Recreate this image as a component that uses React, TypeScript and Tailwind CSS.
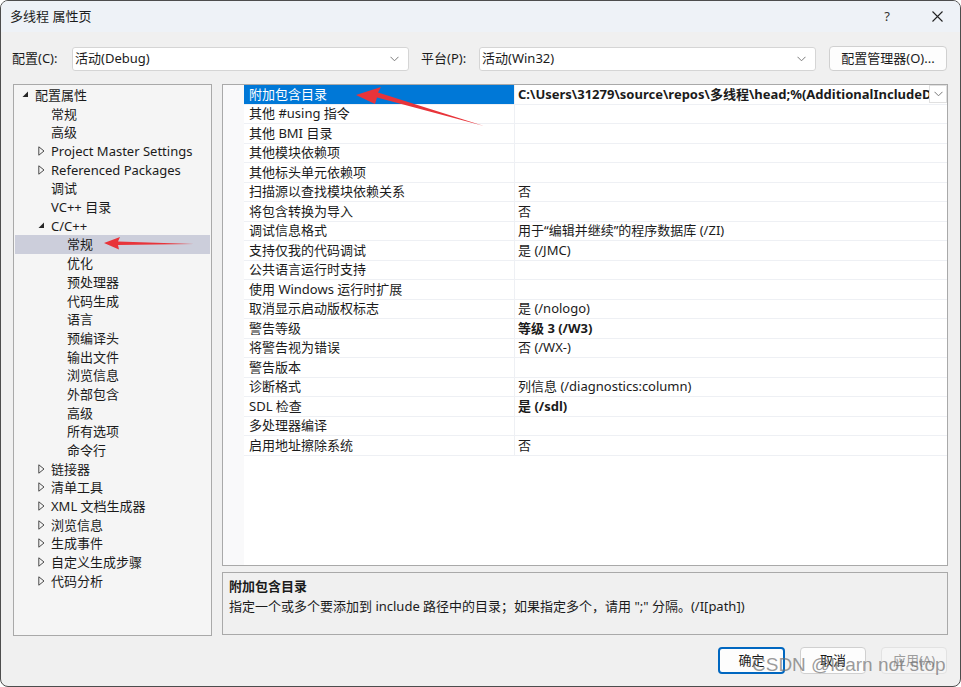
import React from 'react';

type TreeItem = { label: string; level: number; state?: 'open' | 'closed'; selected?: boolean };

const tree: TreeItem[] = [
  { label: '配置属性', level: 0, state: 'open' },
  { label: '常规', level: 1 },
  { label: '高级', level: 1 },
  { label: 'Project Master Settings', level: 1, state: 'closed' },
  { label: 'Referenced Packages', level: 1, state: 'closed' },
  { label: '调试', level: 1 },
  { label: 'VC++ 目录', level: 1 },
  { label: 'C/C++', level: 1, state: 'open' },
  { label: '常规', level: 2, selected: true },
  { label: '优化', level: 2 },
  { label: '预处理器', level: 2 },
  { label: '代码生成', level: 2 },
  { label: '语言', level: 2 },
  { label: '预编译头', level: 2 },
  { label: '输出文件', level: 2 },
  { label: '浏览信息', level: 2 },
  { label: '外部包含', level: 2 },
  { label: '高级', level: 2 },
  { label: '所有选项', level: 2 },
  { label: '命令行', level: 2 },
  { label: '链接器', level: 1, state: 'closed' },
  { label: '清单工具', level: 1, state: 'closed' },
  { label: 'XML 文档生成器', level: 1, state: 'closed' },
  { label: '浏览信息', level: 1, state: 'closed' },
  { label: '生成事件', level: 1, state: 'closed' },
  { label: '自定义生成步骤', level: 1, state: 'closed' },
  { label: '代码分析', level: 1, state: 'closed' },
];

const props: { name: string; value: string; bold?: boolean }[] = [
  { name: '附加包含目录', value: 'C:\\Users\\31279\\source\\repos\\多线程\\head;%(AdditionalIncludeDirectories)', bold: true },
  { name: '其他 #using 指令', value: '' },
  { name: '其他 BMI 目录', value: '' },
  { name: '其他模块依赖项', value: '' },
  { name: '其他标头单元依赖项', value: '' },
  { name: '扫描源以查找模块依赖关系', value: '否' },
  { name: '将包含转换为导入', value: '否' },
  { name: '调试信息格式', value: '用于“编辑并继续”的程序数据库 (/ZI)' },
  { name: '支持仅我的代码调试', value: '是 (/JMC)' },
  { name: '公共语言运行时支持', value: '' },
  { name: '使用 Windows 运行时扩展', value: '' },
  { name: '取消显示启动版权标志', value: '是 (/nologo)' },
  { name: '警告等级', value: '等级 3 (/W3)', bold: true },
  { name: '将警告视为错误', value: '否 (/WX-)' },
  { name: '警告版本', value: '' },
  { name: '诊断格式', value: '列信息 (/diagnostics:column)' },
  { name: 'SDL 检查', value: '是 (/sdl)', bold: true },
  { name: '多处理器编译', value: '' },
  { name: '启用地址擦除系统', value: '否' },
];

function Chevron({ className = '' }: { className?: string }) {
  return (
    <svg width="9" height="6" viewBox="0 0 9 6" className={className}>
      <path d="M0.5 0.8 L4.5 4.8 L8.5 0.8" fill="none" stroke="#7a7a7a" strokeWidth="1" />
    </svg>
  );
}

function Toggle({ state }: { state?: 'open' | 'closed' }) {
  if (state === 'open') {
    return (
      <svg width="7" height="7" viewBox="0 0 7 7">
        <path d="M6 0.5 L6 6 L0.5 6 Z" fill="#262626" />
      </svg>
    );
  }
  if (state === 'closed') {
    return (
      <svg width="7" height="10" viewBox="0 0 7 10">
        <path d="M0.8 0.8 L6 5 L0.8 9.2 Z" fill="none" stroke="#4a4a4a" strokeWidth="1" />
      </svg>
    );
  }
  return null;
}

function Select({ value }: { value: string }) {
  return (
    <div className="w-[337px] h-[24px] bg-white border border-[#d5d5d5] rounded-[3px] flex items-center justify-between pl-[2px] pr-[9px]">
      <span>{value}</span>
      <Chevron />
    </div>
  );
}

export default function App() {
  return (
    <div className="w-[961px] h-[687px] bg-white font-['Noto_Sans','Noto_Sans_CJK_SC',sans-serif] text-[13px] text-[#1b1b1b]">
      <div className="relative w-full h-full bg-[#f0f0f0] border border-[#4d4d4d] rounded-[8px] overflow-hidden flex flex-col">
        {/* title bar */}
        <div className="h-[31px] bg-[#eef2f7] flex items-center justify-between pl-[9px] pr-[17px] shrink-0">
          <span className="text-[13px]">多线程 属性页</span>
          <div className="flex items-center gap-[42px]">
            <span className="text-[13px] text-[#333]">?</span>
            <svg width="11" height="11" viewBox="0 0 11 11">
              <path d="M0.5 0.5 L10.5 10.5 M10.5 0.5 L0.5 10.5" stroke="#222" strokeWidth="1.1" />
            </svg>
          </div>
        </div>

        {/* configuration row */}
        <div className="flex items-center mt-[14px] pl-[11px] h-[25px] shrink-0">
          <span className="w-[60px]">配置(C):</span>
          <Select value="活动(Debug)" />
          <span className="w-[58px] ml-[12px]">平台(P):</span>
          <Select value="活动(Win32)" />
          <div className="ml-[13px] w-[118px] h-[25px] bg-[#fdfdfd] border border-[#d0d0d0] rounded-[4px] flex items-center justify-center">
            配置管理器(O)...
          </div>
        </div>

        {/* main */}
        <div className="flex mt-[13px] pl-[12px] gap-[10px] h-[552px] shrink-0">
          {/* tree */}
          <div className="w-[199px] h-full bg-[#f5f5f5] border border-[#a9a9a9] pt-[0.6px] px-[1px]">
            {tree.map((t, i) => (
              <div
                key={i}
                className={`h-[18.7px] flex items-center whitespace-nowrap ${t.selected ? 'bg-[#cccedb]' : ''}`}
                style={{ paddingLeft: 7 + t.level * 16 }}
              >
                <span className="w-[13px] flex items-center">
                  <Toggle state={t.state} />
                </span>
                <span className="leading-[18px]">{t.label}</span>
              </div>
            ))}
          </div>

          {/* right column */}
          <div className="w-[726px] h-full flex flex-col gap-[6px]">
            <div className="h-[482px] bg-white border border-[#a9a9a9] flex">
              <div className="w-[21px] bg-[#f9f9fa] shrink-0" />
              <div className="flex-1 min-w-0 flex flex-col">
                {props.map((p, i) => (
                  <div key={i} className="h-[19.5px] flex border-b border-[#eef0f4]">
                    <div
                      className={`w-[271px] shrink-0 pl-[5px] flex items-center whitespace-nowrap border-r border-[#eef0f4] ${
                        i === 0 ? 'bg-[#0078d7] text-white' : ''
                      }`}
                    >
                      {p.name}
                    </div>
                    <div className="flex-1 min-w-0 pl-[3px] flex items-center">
                      <span className={`flex-1 min-w-0 overflow-hidden whitespace-nowrap ${p.bold ? 'font-bold' : ''}`}>{p.value}</span>
                      {i === 0 && (
                        <div className="w-[18px] h-[18px] border border-[#e0e0e0] bg-white flex items-center justify-center shrink-0">
                          <Chevron />
                        </div>
                      )}
                    </div>
                  </div>
                ))}
              </div>
            </div>
            <div className="h-[63px] bg-[#f0f0f0] border border-[#a9a9a9] pl-[6px] pt-[3px]">
              <div className="font-bold leading-[20px]">附加包含目录</div>
              <div className="leading-[20px]">指定一个或多个要添加到 include 路径中的目录；如果指定多个，请用 ";" 分隔。(/I[path])</div>
            </div>
          </div>
        </div>

        {/* buttons */}
        <div className="flex justify-end gap-[15px] pr-[13px] mt-[11px] shrink-0">
          <div className="w-[67px] h-[27px] rounded-[4px] border-2 border-[#0067c0] bg-[#fdfdfd] flex items-center justify-center">确定</div>
          <div className="w-[66px] h-[27px] rounded-[4px] border border-[#d0d0d0] bg-[#fdfdfd] flex items-center justify-center">取消</div>
          <div className="w-[66px] h-[27px] rounded-[4px] border border-[#e2e2e2] bg-[#f5f5f5] text-[#9d9d9d] flex items-center justify-center">应用(A)</div>
        </div>

        {/* watermark */}
        <div className="absolute left-[751px] top-[653px] font-['Liberation_Sans',sans-serif] text-[19px] leading-[22px] text-[#6f6f6f]/70 whitespace-nowrap pointer-events-none">
          CSDN @learn not stop
        </div>

        {/* annotation arrows */}
        <svg className="absolute left-0 top-0 pointer-events-none" width="961" height="687" viewBox="0 0 961 687">
          <path d="M355 94 L380 86 L377 91.5 L483 125 L376 96.5 L374 103 Z" fill="#e8343a" />
          <path d="M103 242 L119 236 L117 240.5 L193 243 L117 244 L118 248.5 Z" fill="#e8343a" />
        </svg>
      </div>
    </div>
  );
}
